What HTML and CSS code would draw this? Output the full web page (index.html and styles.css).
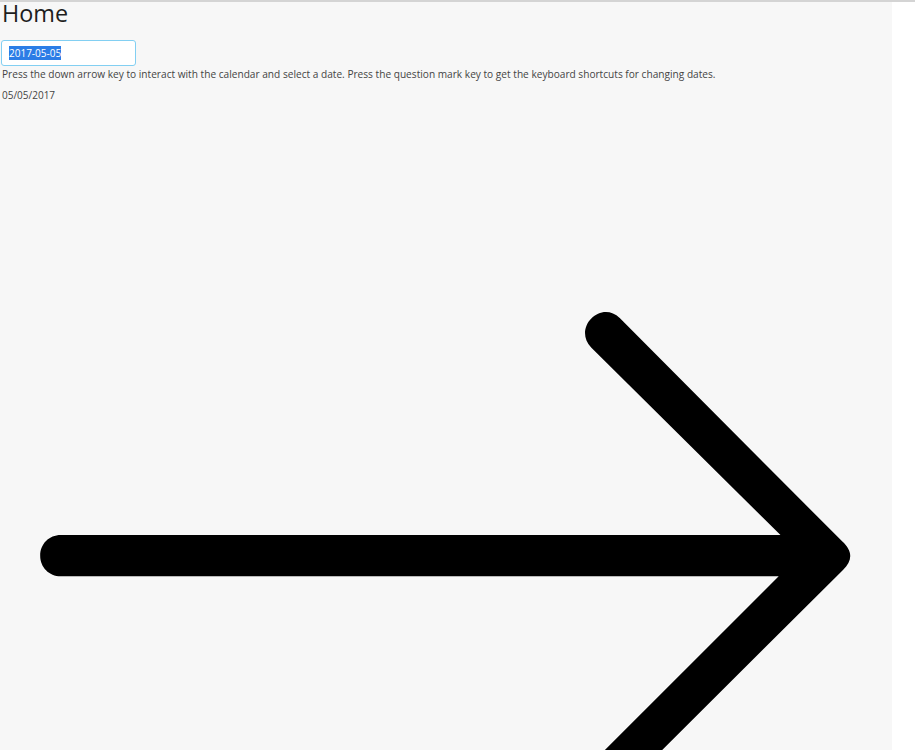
FILE: index.html
```html
<!DOCTYPE html>
<html lang="en">
<head>
<meta charset="utf-8">
<title>Home</title>
<link rel="stylesheet" href="styles.css">
</head>
<body>
<div class="topbar"></div>
<main class="app">
  <h1 class="title">Home</h1>
  <div class="date-input" role="textbox" aria-label="Date"><span class="selected">2017-05-05</span></div>
  <p class="hint">Press the down arrow key to interact with the calendar and select a date. Press the question mark key to get the keyboard shortcuts for changing dates.</p>
  <p class="value">05/05/2017</p>
  <svg class="arrow" viewBox="0 0 1000 1000" aria-hidden="true">
    <path d="M694 242l249 250c12 11 12 21 1 32L694 773c-5 5-10 7-16 7s-11-2-16-7c-11-11-11-21 0-32l210-210H68c-13 0-23-10-23-23s10-23 23-23h806L662 275c-21-22 11-54 32-33z"/>
  </svg>
</main>
</body>
</html>
```
FILE: styles.css
```css
html, body {
  margin: 0;
  padding: 0;
  background: #ffffff;
}

body {
  font-family: "Open Sans", "DejaVu Sans", sans-serif;
  color: #444444;
  height: 750px;
  overflow: hidden;
}

.topbar {
  height: 2px;
  background: #d4d4d4;
}

.app {
  display: block;
  width: 892px;
  height: 748px;
  overflow: hidden;
  background: #f7f7f7;
  padding-left: 2px;
  box-sizing: border-box;
}

.title {
  margin: 0 0 16px 0;
  padding-top: 0;
  font-size: 23.4px;
  line-height: 22px;
  font-weight: 400;
  color: #1e1e1e;
}

.date-input {
  width: 135px;
  height: 26px;
  box-sizing: border-box;
  border: 1px solid #82cff2;
  border-radius: 3px;
  background: #ffffff;
  padding-left: 7px;
  display: flex;
  align-items: center;
  font-size: 10px;
  line-height: 14px;
  color: #484848;
  margin-left: -1px;
}

.selected {
  background: #2b7de6;
  color: #ffffff;
}

.hint {
  margin: 1px 0 0 0;
  font-size: 10.15px;
  line-height: 14px;
}

.value {
  margin: 7px 0 0 0;
  font-size: 10px;
  line-height: 14px;
}

.arrow {
  display: block;
  width: 893px;
  height: 893px;
  margin-left: -2px;
  fill: #000000;
}
```
